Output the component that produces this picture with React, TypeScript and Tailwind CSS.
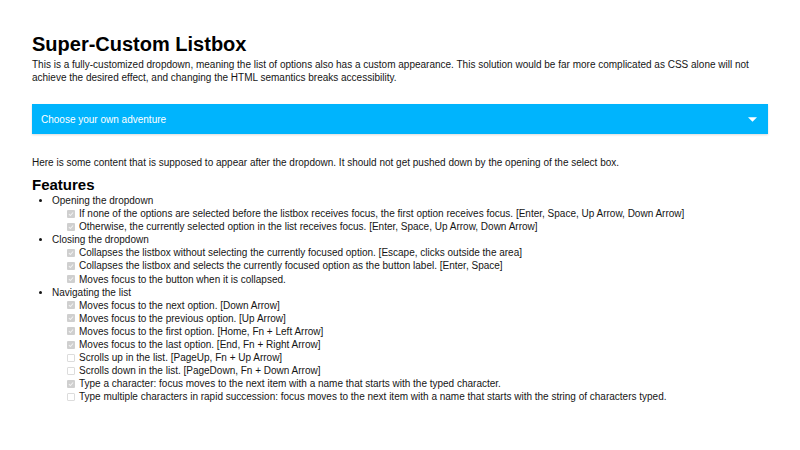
import React from 'react';

type Feature = { label: string; done: boolean };
type Group = { title: string; items: Feature[] };

const groups: Group[] = [
  {
    title: 'Opening the dropdown',
    items: [
      {
        label:
          'If none of the options are selected before the listbox receives focus, the first option receives focus. [Enter, Space, Up Arrow, Down Arrow]',
        done: true,
      },
      {
        label:
          'Otherwise, the currently selected option in the list receives focus. [Enter, Space, Up Arrow, Down Arrow]',
        done: true,
      },
    ],
  },
  {
    title: 'Closing the dropdown',
    items: [
      {
        label:
          'Collapses the listbox without selecting the currently focused option. [Escape, clicks outside the area]',
        done: true,
      },
      {
        label:
          'Collapses the listbox and selects the currently focused option as the button label. [Enter, Space]',
        done: true,
      },
      { label: 'Moves focus to the button when it is collapsed.', done: true },
    ],
  },
  {
    title: 'Navigating the list',
    items: [
      { label: 'Moves focus to the next option. [Down Arrow]', done: true },
      { label: 'Moves focus to the previous option. [Up Arrow]', done: true },
      { label: 'Moves focus to the first option. [Home, Fn + Left Arrow]', done: true },
      { label: 'Moves focus to the last option. [End, Fn + Right Arrow]', done: true },
      { label: 'Scrolls up in the list. [PageUp, Fn + Up Arrow]', done: false },
      { label: 'Scrolls down in the list. [PageDown, Fn + Down Arrow]', done: false },
      {
        label:
          'Type a character: focus moves to the next item with a name that starts with the typed character.',
        done: true,
      },
      {
        label:
          'Type multiple characters in rapid succession: focus moves to the next item with a name that starts with the string of characters typed.',
        done: false,
      },
    ],
  },
];

// disabled checkbox look: filled grey when done, faint outline otherwise
function CheckMark({ checked }: { checked: boolean }) {
  return (
    <span className="flex w-[13px] shrink-0 justify-start">
      <span
        className={
          checked
            ? 'inline-flex w-[8px] h-[8px] ml-[1px] rounded-[1px] bg-[#cfcfcf] items-center justify-center'
            : 'inline-flex w-[8px] h-[8px] ml-[1px] rounded-[1px] border border-[#dcdcdc] bg-white'
        }
      >
        {checked && (
          <svg viewBox="0 0 10 10" className="w-[6px] h-[6px]">
            <path d="M1.5 5.2 L4 7.5 L8.5 2.5" fill="none" stroke="#f2f2f2" strokeWidth="1.8" />
          </svg>
        )}
      </span>
    </span>
  );
}

export default function App() {
  return (
    <div className="min-h-[450px] bg-white px-8 pt-[33px] font-['Liberation_Sans',Arial,sans-serif] text-[10px] text-[#151515]">
      <h1 className="text-[20px] font-bold leading-[22px] text-black">Super-Custom Listbox</h1>
      <p className="leading-[13px] mt-[3px]">
        This is a fully-customized dropdown, meaning the list of options also has a custom appearance. This
        solution would be far more complicated as CSS alone will not achieve the desired effect, and changing the
        HTML semantics breaks accessibility.
      </p>

      <button
        type="button"
        className="mt-[20px] w-full h-[30px] flex items-center justify-between pl-[9px] pr-[11px] bg-[#00b4fd] text-white text-[10px] shadow-[0_1px_2px_rgba(0,0,0,0.15)]"
      >
        <span>Choose your own adventure</span>
        <svg viewBox="0 0 10 5" className="w-[9px] h-[5px]">
          <path d="M0 0 H10 L5 5 Z" fill="white" />
        </svg>
      </button>

      <p className="mt-[22px] leading-[13px]">
        Here is some content that is supposed to appear after the dropdown. It should not get pushed down by the
        opening of the select box.
      </p>

      <h2 className="mt-[7px] text-[15px] font-bold leading-[18px] text-black">Features</h2>
      <ul className="list-disc pl-[20px] leading-[13.1px]">
        {groups.map((g) => (
          <li key={g.title}>
            {g.title}
            <ul className="list-none pl-[14px]">
              {g.items.map((it) => (
                <li key={it.label} className="flex items-center">
                  <CheckMark checked={it.done} />
                  <span>{it.label}</span>
                </li>
              ))}
            </ul>
          </li>
        ))}
      </ul>
    </div>
  );
}
